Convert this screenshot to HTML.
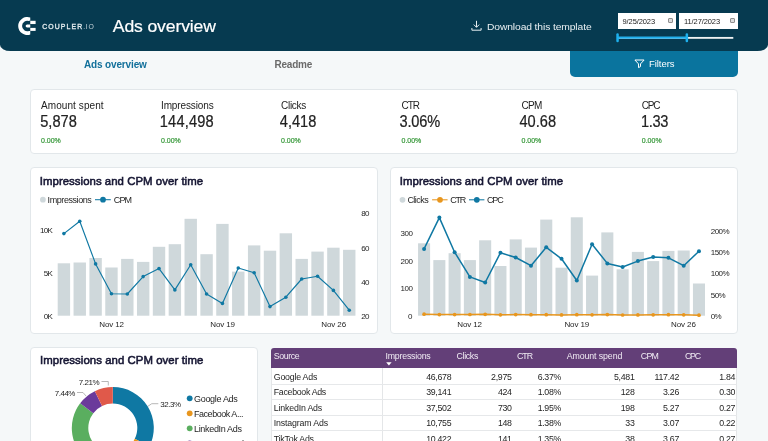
<!DOCTYPE html>
<html lang="en"><head><meta charset="utf-8"><title>Ads overview</title>
<style>
html,body{margin:0;padding:0;}
body{width:768px;height:441px;overflow:hidden;background:#f5f8f9;position:relative;font-family:"Liberation Sans",sans-serif;}
.t{position:absolute;white-space:nowrap;margin:0;}
.b{position:absolute;}
#root{position:absolute;left:0;top:0;width:768px;height:441px;will-change:transform;}
</style></head><body><div id="root">
<div class="b" style="left:0px;top:0px;width:768px;height:51px;background:#063a50;border-radius:0 0 10.5px 10.5px / 0 0 6.3px 6.3px;"></div>
<svg class="b" style="left:18px;top:17px" width="18" height="18" viewBox="0 0 18 18">
<path d="M12.26 0.54 A9 9 0 1 0 12.26 17.46 L12.26 13.9 L11 13.9 A5.2 5.2 0 1 1 11 4.1 L11 3.8 L12.26 3.8 Z" fill="#fff"/>
<rect x="12.26" y="3.8" width="5.35" height="3.25" fill="#fff"/>
<path d="M12.26 7.45 H9.1 A1.58 1.58 0 0 0 9.1 10.6 H12.26 Z" fill="#fff"/>
<rect x="12.26" y="10.9" width="5.35" height="3" fill="#fff"/>
</svg>
<div class="t" style="left:42.20px;top:22.80px;font-size:6.9px;line-height:7.00px;color:#e4ecef;letter-spacing:1.116px;transform:scaleY(1.13);transform-origin:0 6.00px;-webkit-text-stroke:0.3px #e4ecef;">COUPLER</div>
<div class="t" style="left:83.20px;top:22.80px;font-size:6.9px;line-height:7.00px;color:#c5d3d9;letter-spacing:0.764px;transform:scaleY(1.13);transform-origin:0 6.00px;">.IO</div>
<div class="t" style="left:112.80px;top:16.20px;font-size:17.6px;line-height:20.00px;color:#fff;letter-spacing:-0.136px;transform:scaleY(0.91);transform-origin:0 16.00px;-webkit-text-stroke:0.2px #fff;">Ads overview</div>
<svg class="b" style="left:471px;top:20px" width="11" height="11" viewBox="0 0 11 11" fill="none" stroke="#e8eff2" stroke-width="1">
<path d="M5.5 0.8 V7.2 M2.8 4.6 L5.5 7.3 L8.2 4.6 M0.9 8 V10.2 H10.1 V8"/></svg>
<div class="t" style="left:487.00px;top:21.10px;font-size:10.3px;line-height:11.00px;color:#e8eff2;letter-spacing:-0.115px;transform:scaleY(0.93);transform-origin:0 9.00px;">Download this template</div>
<div class="b" style="left:617.5px;top:13px;width:58.5px;height:16.3px;background:#fff;"></div>
<div class="b" style="left:679px;top:13px;width:58.7px;height:16.3px;background:#fff;"></div>
<div class="t" style="left:622.50px;top:17.00px;font-size:7.5px;line-height:9.00px;color:#1a1a1a;letter-spacing:-0.096px;">9/25/2023</div>
<div class="t" style="left:684.00px;top:17.00px;font-size:7.5px;line-height:9.00px;color:#1a1a1a;letter-spacing:-0.098px;">11/27/2023</div>
<div class="b" style="left:668.0px;top:18.3px;width:5px;height:5px;background:#dcdcdc;border:1px solid #8f8f8f;border-radius:1px;box-sizing:border-box;"></div>
<div class="b" style="left:729.5px;top:18.3px;width:5px;height:5px;background:#dcdcdc;border:1px solid #8f8f8f;border-radius:1px;box-sizing:border-box;"></div>
<div class="b" style="left:570px;top:51px;width:168px;height:26px;background:#0a749e;border-radius:0 0 5px 5px;"></div>
<svg class="b" style="left:634px;top:59.4px" width="11" height="10" viewBox="0 0 11 10" fill="none" stroke="#fff" stroke-width="1" stroke-linejoin="round">
<path d="M0.9 1 H10.1 L6.5 4.9 V7.6 L4.5 8.6 V4.9 Z"/></svg>
<div class="t" style="left:649.00px;top:58.20px;font-size:9.5px;line-height:11.00px;color:#fff;letter-spacing:-0.052px;">Filters</div>
<div class="t" style="left:83.90px;top:59.20px;font-size:10px;line-height:11.00px;color:#12709b;font-weight:700;letter-spacing:-0.139px;">Ads overview</div>
<div class="t" style="left:274.60px;top:59.20px;font-size:10px;line-height:11.00px;color:#6a6a6a;font-weight:700;letter-spacing:-0.251px;">Readme</div>
<div class="b" style="left:30px;top:89px;width:708px;height:65px;background:#fff;border:1px solid #e2e7ea;border-radius:4px;box-sizing:border-box;"></div>
<div class="t" style="left:41.00px;top:99.60px;font-size:10px;line-height:11.00px;color:#222;letter-spacing:0.083px;">Amount spent</div>
<div class="t" style="left:40.20px;top:114.00px;font-size:14.6px;line-height:16.00px;color:#222;letter-spacing:0.036px;transform:scaleY(1.1);transform-origin:0 13.00px;-webkit-text-stroke:0.2px #222;">5,878</div>
<div class="t" style="left:41.00px;top:137.20px;font-size:7px;line-height:7.00px;color:#37983a;letter-spacing:-0.010px;-webkit-text-stroke:0.2px #37983a;">0.00%</div>
<div class="t" style="left:161.00px;top:99.60px;font-size:10px;line-height:11.00px;color:#222;letter-spacing:-0.128px;">Impressions</div>
<div class="t" style="left:159.80px;top:114.00px;font-size:14.6px;line-height:16.00px;color:#222;letter-spacing:0.178px;transform:scaleY(1.1);transform-origin:0 13.00px;-webkit-text-stroke:0.2px #222;">144,498</div>
<div class="t" style="left:161.00px;top:137.20px;font-size:7px;line-height:7.00px;color:#37983a;letter-spacing:-0.010px;-webkit-text-stroke:0.2px #37983a;">0.00%</div>
<div class="t" style="left:281.00px;top:99.60px;font-size:10px;line-height:11.00px;color:#222;letter-spacing:-0.278px;">Clicks</div>
<div class="t" style="left:279.80px;top:114.00px;font-size:14.6px;line-height:16.00px;color:#222;letter-spacing:-0.004px;transform:scaleY(1.1);transform-origin:0 13.00px;-webkit-text-stroke:0.2px #222;">4,418</div>
<div class="t" style="left:281.00px;top:137.20px;font-size:7px;line-height:7.00px;color:#37983a;letter-spacing:-0.010px;-webkit-text-stroke:0.2px #37983a;">0.00%</div>
<div class="t" style="left:401.50px;top:99.60px;font-size:10px;line-height:11.00px;color:#222;letter-spacing:-1.017px;">CTR</div>
<div class="t" style="left:399.50px;top:114.00px;font-size:14.6px;line-height:16.00px;color:#222;letter-spacing:-0.176px;transform:scaleY(1.1);transform-origin:0 13.00px;-webkit-text-stroke:0.2px #222;">3.06%</div>
<div class="t" style="left:401.50px;top:137.20px;font-size:7px;line-height:7.00px;color:#37983a;letter-spacing:-0.010px;-webkit-text-stroke:0.2px #37983a;">0.00%</div>
<div class="t" style="left:521.50px;top:99.60px;font-size:10px;line-height:11.00px;color:#222;letter-spacing:-0.741px;">CPM</div>
<div class="t" style="left:519.50px;top:114.00px;font-size:14.6px;line-height:16.00px;color:#222;letter-spacing:-0.004px;transform:scaleY(1.1);transform-origin:0 13.00px;-webkit-text-stroke:0.2px #222;">40.68</div>
<div class="t" style="left:521.50px;top:137.20px;font-size:7px;line-height:7.00px;color:#37983a;letter-spacing:-0.010px;-webkit-text-stroke:0.2px #37983a;">0.00%</div>
<div class="t" style="left:641.80px;top:99.60px;font-size:10px;line-height:11.00px;color:#222;letter-spacing:-1.171px;">CPC</div>
<div class="t" style="left:641.00px;top:114.00px;font-size:14.6px;line-height:16.00px;color:#222;letter-spacing:-0.351px;transform:scaleY(1.1);transform-origin:0 13.00px;-webkit-text-stroke:0.2px #222;">1.33</div>
<div class="t" style="left:641.80px;top:137.20px;font-size:7px;line-height:7.00px;color:#37983a;letter-spacing:-0.010px;-webkit-text-stroke:0.2px #37983a;">0.00%</div>
<div class="b" style="left:30px;top:167px;width:348px;height:167px;background:#fff;border:1px solid #e2e7ea;border-radius:4px;box-sizing:border-box;"></div>
<div class="b" style="left:390px;top:167px;width:348px;height:167px;background:#fff;border:1px solid #e2e7ea;border-radius:4px;box-sizing:border-box;"></div>
<div class="t" style="left:39.80px;top:174.90px;font-size:11.4px;line-height:12.00px;color:#161633;letter-spacing:0.042px;-webkit-text-stroke:0.55px #161633;">Impressions and CPM over time</div>
<div class="t" style="left:399.80px;top:174.90px;font-size:11.4px;line-height:12.00px;color:#161633;letter-spacing:0.042px;-webkit-text-stroke:0.55px #161633;">Impressions and CPM over time</div>
<div class="b" style="left:30px;top:347px;width:228px;height:100px;background:#fff;border:1px solid #e2e7ea;border-radius:4px;box-sizing:border-box;"></div>
<div class="b" style="left:271px;top:348px;width:466px;height:100px;background:#fff;border:1px solid #e4e6e8;border-radius:3px 3px 0 0;box-sizing:border-box;"></div>
<div class="b" style="left:271px;top:348px;width:466px;height:20px;background:#633f78;border-radius:3px 3px 0 0;"></div>
<div class="b" style="left:382px;top:368.3px;width:0.8px;height:80px;background:#e4e6e8;"></div>
<div class="b" style="left:271.5px;top:383.6px;width:465px;height:0.8px;background:#e6e8ea;"></div>
<div class="b" style="left:271.5px;top:399.1px;width:465px;height:0.8px;background:#e6e8ea;"></div>
<div class="b" style="left:271.5px;top:414.6px;width:465px;height:0.8px;background:#e6e8ea;"></div>
<div class="b" style="left:271.5px;top:430.1px;width:465px;height:0.8px;background:#e6e8ea;"></div>
<svg class="b" style="left:0;top:0" width="768" height="441" viewBox="0 0 768 441">
<rect x="617.5" y="36.95" width="115.8" height="1.85" fill="#eef1f2"/>
<rect x="617.5" y="36.55" width="69.5" height="2.15" fill="#1db0ee"/>
<rect x="616.3" y="33.3" width="2.5" height="9" rx="1.2" fill="#1db0ee"/>
<rect x="685.6" y="33.3" width="2.5" height="9" rx="1.2" fill="#1db0ee"/>
<rect x="57.70" y="263.3" width="12.4" height="52.40" fill="#cfd8db"/>
<rect x="73.55" y="262.5" width="12.4" height="53.20" fill="#cfd8db"/>
<rect x="89.41" y="258" width="12.4" height="57.70" fill="#cfd8db"/>
<rect x="105.26" y="267.5" width="12.4" height="48.20" fill="#cfd8db"/>
<rect x="121.11" y="258.9" width="12.4" height="56.80" fill="#cfd8db"/>
<rect x="136.97" y="261.9" width="12.4" height="53.80" fill="#cfd8db"/>
<rect x="152.82" y="246.8" width="12.4" height="68.90" fill="#cfd8db"/>
<rect x="168.67" y="244.2" width="12.4" height="71.50" fill="#cfd8db"/>
<rect x="184.52" y="218.8" width="12.4" height="96.90" fill="#cfd8db"/>
<rect x="200.38" y="254.2" width="12.4" height="61.50" fill="#cfd8db"/>
<rect x="216.23" y="223.9" width="12.4" height="91.80" fill="#cfd8db"/>
<rect x="232.08" y="271.6" width="12.4" height="44.10" fill="#cfd8db"/>
<rect x="247.94" y="245.4" width="12.4" height="70.30" fill="#cfd8db"/>
<rect x="263.79" y="250.7" width="12.4" height="65.00" fill="#cfd8db"/>
<rect x="279.64" y="233.3" width="12.4" height="82.40" fill="#cfd8db"/>
<rect x="295.50" y="258.9" width="12.4" height="56.80" fill="#cfd8db"/>
<rect x="311.35" y="251.6" width="12.4" height="64.10" fill="#cfd8db"/>
<rect x="327.20" y="247.7" width="12.4" height="68.00" fill="#cfd8db"/>
<rect x="343.05" y="249.8" width="12.4" height="65.90" fill="#cfd8db"/>
<polyline fill="none" stroke="#0f78a3" stroke-width="1.15" stroke-linejoin="round" points="63.9,233.6 79.75,221.2 95.61,263.9 111.46,293.7 127.31,294 143.16,276.6 159.02,268.6 174.87,289.9 190.72,264.8 206.58,294 222.43,303.4 238.28,268 254.14,272.8 269.99,306.6 285.84,297.2 301.69,279 317.55,276.3 333.4,290.4 349.25,310.2"/>
<circle cx="63.9" cy="233.6" r="1.8" fill="#0f78a3"/>
<circle cx="79.75" cy="221.2" r="1.8" fill="#0f78a3"/>
<circle cx="95.61" cy="263.9" r="1.8" fill="#0f78a3"/>
<circle cx="111.46" cy="293.7" r="1.8" fill="#0f78a3"/>
<circle cx="127.31" cy="294" r="1.8" fill="#0f78a3"/>
<circle cx="143.16" cy="276.6" r="1.8" fill="#0f78a3"/>
<circle cx="159.02" cy="268.6" r="1.8" fill="#0f78a3"/>
<circle cx="174.87" cy="289.9" r="1.8" fill="#0f78a3"/>
<circle cx="190.72" cy="264.8" r="1.8" fill="#0f78a3"/>
<circle cx="206.58" cy="294" r="1.8" fill="#0f78a3"/>
<circle cx="222.43" cy="303.4" r="1.8" fill="#0f78a3"/>
<circle cx="238.28" cy="268" r="1.8" fill="#0f78a3"/>
<circle cx="254.14" cy="272.8" r="1.8" fill="#0f78a3"/>
<circle cx="269.99" cy="306.6" r="1.8" fill="#0f78a3"/>
<circle cx="285.84" cy="297.2" r="1.8" fill="#0f78a3"/>
<circle cx="301.69" cy="279" r="1.8" fill="#0f78a3"/>
<circle cx="317.55" cy="276.3" r="1.8" fill="#0f78a3"/>
<circle cx="333.4" cy="290.4" r="1.8" fill="#0f78a3"/>
<circle cx="349.25" cy="310.2" r="1.8" fill="#0f78a3"/>
<circle cx="42.9" cy="199.7" r="2.85" fill="#cfd8db"/>
<line x1="95" y1="199.7" x2="110.8" y2="199.7" stroke="#0f78a3" stroke-width="1.05"/><circle cx="103" cy="199.7" r="2.85" fill="#0f78a3"/>
<rect x="418.05" y="243.3" width="12.05" height="72.40" fill="#cfd8db"/>
<rect x="433.32" y="260.1" width="12.05" height="55.60" fill="#cfd8db"/>
<rect x="448.59" y="253.2" width="12.05" height="62.50" fill="#cfd8db"/>
<rect x="463.87" y="260.1" width="12.05" height="55.60" fill="#cfd8db"/>
<rect x="479.14" y="240.3" width="12.05" height="75.40" fill="#cfd8db"/>
<rect x="494.41" y="266" width="12.05" height="49.70" fill="#cfd8db"/>
<rect x="509.68" y="239.4" width="12.05" height="76.30" fill="#cfd8db"/>
<rect x="524.95" y="247.6" width="12.05" height="68.10" fill="#cfd8db"/>
<rect x="540.23" y="219.6" width="12.05" height="96.10" fill="#cfd8db"/>
<rect x="555.50" y="267.7" width="12.05" height="48.00" fill="#cfd8db"/>
<rect x="570.77" y="217.3" width="12.05" height="98.40" fill="#cfd8db"/>
<rect x="586.04" y="275.6" width="12.05" height="40.10" fill="#cfd8db"/>
<rect x="601.31" y="232.4" width="12.05" height="83.30" fill="#cfd8db"/>
<rect x="616.59" y="269.3" width="12.05" height="46.40" fill="#cfd8db"/>
<rect x="631.86" y="251.9" width="12.05" height="63.80" fill="#cfd8db"/>
<rect x="647.13" y="261.1" width="12.05" height="54.60" fill="#cfd8db"/>
<rect x="662.40" y="250.9" width="12.05" height="64.80" fill="#cfd8db"/>
<rect x="677.67" y="250.5" width="12.05" height="65.20" fill="#cfd8db"/>
<rect x="692.95" y="283.5" width="12.05" height="32.20" fill="#cfd8db"/>
<polyline fill="none" stroke="#e8961e" stroke-width="1.5" stroke-linejoin="round" points="424.08,314.2 439.35,314.6 454.62,314.6 469.9,314.5 485.17,314.3 500.44,314.8 515.71,314.6 530.98,314.7 546.26,314.7 561.53,314.9 576.8,314.7 592.07,314.8 607.34,314.6 622.62,315 637.89,314.9 653.16,314.8 668.43,314.7 683.7,314.8 698.98,315.2"/>
<circle cx="424.08" cy="314.2" r="1.85" fill="#e8961e"/>
<circle cx="439.35" cy="314.6" r="1.85" fill="#e8961e"/>
<circle cx="454.62" cy="314.6" r="1.85" fill="#e8961e"/>
<circle cx="469.9" cy="314.5" r="1.85" fill="#e8961e"/>
<circle cx="485.17" cy="314.3" r="1.85" fill="#e8961e"/>
<circle cx="500.44" cy="314.8" r="1.85" fill="#e8961e"/>
<circle cx="515.71" cy="314.6" r="1.85" fill="#e8961e"/>
<circle cx="530.98" cy="314.7" r="1.85" fill="#e8961e"/>
<circle cx="546.26" cy="314.7" r="1.85" fill="#e8961e"/>
<circle cx="561.53" cy="314.9" r="1.85" fill="#e8961e"/>
<circle cx="576.8" cy="314.7" r="1.85" fill="#e8961e"/>
<circle cx="592.07" cy="314.8" r="1.85" fill="#e8961e"/>
<circle cx="607.34" cy="314.6" r="1.85" fill="#e8961e"/>
<circle cx="622.62" cy="315" r="1.85" fill="#e8961e"/>
<circle cx="637.89" cy="314.9" r="1.85" fill="#e8961e"/>
<circle cx="653.16" cy="314.8" r="1.85" fill="#e8961e"/>
<circle cx="668.43" cy="314.7" r="1.85" fill="#e8961e"/>
<circle cx="683.7" cy="314.8" r="1.85" fill="#e8961e"/>
<circle cx="698.98" cy="315.2" r="1.85" fill="#e8961e"/>
<polyline fill="none" stroke="#0f78a3" stroke-width="1.5" stroke-linejoin="round" points="424.08,248.9 439.35,217.6 454.62,252.2 469.9,276.9 485.17,282.5 500.44,252.8 515.71,257.5 530.98,265.7 546.26,247.3 561.53,258.8 576.8,280.5 592.07,244.3 607.34,263.4 622.62,267 637.89,261.1 653.16,257.1 668.43,257.8 683.7,265.7 698.98,251.2"/>
<circle cx="424.08" cy="248.9" r="2" fill="#0f78a3"/>
<circle cx="439.35" cy="217.6" r="2" fill="#0f78a3"/>
<circle cx="454.62" cy="252.2" r="2" fill="#0f78a3"/>
<circle cx="469.9" cy="276.9" r="2" fill="#0f78a3"/>
<circle cx="485.17" cy="282.5" r="2" fill="#0f78a3"/>
<circle cx="500.44" cy="252.8" r="2" fill="#0f78a3"/>
<circle cx="515.71" cy="257.5" r="2" fill="#0f78a3"/>
<circle cx="530.98" cy="265.7" r="2" fill="#0f78a3"/>
<circle cx="546.26" cy="247.3" r="2" fill="#0f78a3"/>
<circle cx="561.53" cy="258.8" r="2" fill="#0f78a3"/>
<circle cx="576.8" cy="280.5" r="2" fill="#0f78a3"/>
<circle cx="592.07" cy="244.3" r="2" fill="#0f78a3"/>
<circle cx="607.34" cy="263.4" r="2" fill="#0f78a3"/>
<circle cx="622.62" cy="267" r="2" fill="#0f78a3"/>
<circle cx="637.89" cy="261.1" r="2" fill="#0f78a3"/>
<circle cx="653.16" cy="257.1" r="2" fill="#0f78a3"/>
<circle cx="668.43" cy="257.8" r="2" fill="#0f78a3"/>
<circle cx="683.7" cy="265.7" r="2" fill="#0f78a3"/>
<circle cx="698.98" cy="251.2" r="2" fill="#0f78a3"/>
<circle cx="402.5" cy="199.8" r="2.85" fill="#cfd8db"/>
<line x1="432.1" y1="199.8" x2="447.6" y2="199.8" stroke="#e8961e" stroke-width="1.05"/><circle cx="440" cy="199.8" r="2.85" fill="#e8961e"/>
<line x1="469" y1="199.8" x2="484.4" y2="199.8" stroke="#0f78a3" stroke-width="1.05"/><circle cx="476.8" cy="199.8" r="2.85" fill="#0f78a3"/>
<path d="M112.80 387.00 A41 41 0 0 1 149.56 446.16 L134.77 438.85 A24.5 24.5 0 0 0 112.80 403.50 Z" fill="#0f78a3"/>
<path d="M149.56 446.16 A41 41 0 0 1 89.99 462.07 L99.17 448.36 A24.5 24.5 0 0 0 134.77 438.85 Z" fill="#e8961e"/>
<path d="M89.99 462.07 A41 41 0 0 1 80.16 403.19 L93.30 413.17 A24.5 24.5 0 0 0 99.17 448.36 Z" fill="#5aae5f"/>
<path d="M80.16 403.19 A41 41 0 0 1 94.85 391.14 L102.07 405.97 A24.5 24.5 0 0 0 93.30 413.17 Z" fill="#6b3a9b"/>
<path d="M94.85 391.14 A41 41 0 0 1 112.80 387.00 L112.80 403.50 A24.5 24.5 0 0 0 102.07 405.97 Z" fill="#e0594a"/>
<path d="M101.5 381.5 H108.3 V385.5 M77 392.5 H83 L86 396 M148 406.2 L151.8 403.7 H158.3" fill="none" stroke="#999" stroke-width="0.7"/>
<circle cx="189.7" cy="398.3" r="2.9" fill="#0f78a3"/>
<circle cx="189.7" cy="413.3" r="2.9" fill="#e8961e"/>
<circle cx="189.7" cy="428.3" r="2.9" fill="#5aae5f"/>
<circle cx="189.7" cy="443.3" r="2.9" fill="#6b3a9b"/>
</svg>
<div class="t" style="left:40.00px;top:354.40px;font-size:11.4px;line-height:12.00px;color:#161633;letter-spacing:0.049px;-webkit-text-stroke:0.55px #161633;">Impressions and CPM over time</div>
<div class="t" style="left:47.60px;top:195.00px;font-size:9px;line-height:10.00px;color:#252525;letter-spacing:-0.429px;">Impressions</div>
<div class="t" style="left:113.80px;top:195.00px;font-size:9px;line-height:10.00px;color:#252525;letter-spacing:-0.867px;">CPM</div>
<div class="t" style="left:39.89px;top:226.20px;font-size:8px;line-height:9.00px;color:#252525;letter-spacing:-0.641px;">10K</div>
<div class="t" style="left:43.74px;top:269.20px;font-size:8px;line-height:9.00px;color:#252525;letter-spacing:-0.660px;">5K</div>
<div class="t" style="left:43.74px;top:311.70px;font-size:8px;line-height:9.00px;color:#252525;letter-spacing:-0.660px;">0K</div>
<div class="t" style="left:361.20px;top:209.20px;font-size:8px;line-height:9.00px;color:#252525;letter-spacing:-0.549px;">80</div>
<div class="t" style="left:361.20px;top:244.30px;font-size:8px;line-height:9.00px;color:#252525;letter-spacing:-0.549px;">60</div>
<div class="t" style="left:361.20px;top:278.20px;font-size:8px;line-height:9.00px;color:#252525;letter-spacing:-0.549px;">40</div>
<div class="t" style="left:361.20px;top:312.10px;font-size:8px;line-height:9.00px;color:#252525;letter-spacing:-0.549px;">20</div>
<div class="t" style="left:99.25px;top:319.60px;font-size:8px;line-height:9.00px;color:#252525;letter-spacing:-0.108px;">Nov 12</div>
<div class="t" style="left:210.25px;top:319.60px;font-size:8px;line-height:9.00px;color:#252525;letter-spacing:-0.108px;">Nov 19</div>
<div class="t" style="left:321.35px;top:319.60px;font-size:8px;line-height:9.00px;color:#252525;letter-spacing:-0.108px;">Nov 26</div>
<div class="t" style="left:407.40px;top:195.00px;font-size:9px;line-height:10.00px;color:#252525;letter-spacing:-0.533px;">Clicks</div>
<div class="t" style="left:450.20px;top:195.00px;font-size:9px;line-height:10.00px;color:#252525;letter-spacing:-1.232px;">CTR</div>
<div class="t" style="left:487.00px;top:195.00px;font-size:9px;line-height:10.00px;color:#252525;letter-spacing:-1.167px;">CPC</div>
<div class="t" style="left:400.52px;top:229.10px;font-size:8px;line-height:9.00px;color:#252525;letter-spacing:-0.489px;">300</div>
<div class="t" style="left:400.52px;top:256.70px;font-size:8px;line-height:9.00px;color:#252525;letter-spacing:-0.489px;">200</div>
<div class="t" style="left:400.52px;top:284.40px;font-size:8px;line-height:9.00px;color:#252525;letter-spacing:-0.489px;">100</div>
<div class="t" style="left:407.95px;top:311.80px;font-size:8px;line-height:9.00px;color:#252525;">0</div>
<div class="t" style="left:710.70px;top:226.85px;font-size:8px;line-height:9.00px;color:#252525;letter-spacing:-0.486px;">200%</div>
<div class="t" style="left:710.70px;top:248.10px;font-size:8px;line-height:9.00px;color:#252525;letter-spacing:-0.486px;">150%</div>
<div class="t" style="left:710.70px;top:269.35px;font-size:8px;line-height:9.00px;color:#252525;letter-spacing:-0.486px;">100%</div>
<div class="t" style="left:710.70px;top:290.60px;font-size:8px;line-height:9.00px;color:#252525;letter-spacing:-0.507px;">50%</div>
<div class="t" style="left:710.70px;top:311.85px;font-size:8px;line-height:9.00px;color:#252525;letter-spacing:-0.549px;">0%</div>
<div class="t" style="left:457.25px;top:319.60px;font-size:8px;line-height:9.00px;color:#252525;letter-spacing:-0.108px;">Nov 12</div>
<div class="t" style="left:564.45px;top:319.60px;font-size:8px;line-height:9.00px;color:#252525;letter-spacing:-0.108px;">Nov 19</div>
<div class="t" style="left:671.05px;top:319.60px;font-size:8px;line-height:9.00px;color:#252525;letter-spacing:-0.108px;">Nov 26</div>
<div class="t" style="left:78.80px;top:378.00px;font-size:8px;line-height:9.00px;color:#252525;letter-spacing:-0.477px;">7.21%</div>
<div class="t" style="left:54.70px;top:389.00px;font-size:8px;line-height:9.00px;color:#252525;letter-spacing:-0.477px;">7.44%</div>
<div class="t" style="left:160.30px;top:400.00px;font-size:8px;line-height:9.00px;color:#252525;letter-spacing:-0.477px;">32.3%</div>
<div class="t" style="left:194.00px;top:394.10px;font-size:9px;line-height:10.00px;color:#252525;letter-spacing:-0.303px;">Google Ads</div>
<div class="t" style="left:194.00px;top:409.10px;font-size:9px;line-height:10.00px;color:#252525;letter-spacing:-0.464px;">Facebook A...</div>
<div class="t" style="left:194.00px;top:424.10px;font-size:9px;line-height:10.00px;color:#252525;letter-spacing:-0.328px;">LinkedIn Ads</div>
<div class="t" style="left:194.00px;top:439.10px;font-size:9px;line-height:10.00px;color:#252525;letter-spacing:-0.271px;">Instagram Ads</div>
<div class="t" style="left:273.80px;top:350.80px;font-size:8.8px;line-height:10.00px;color:#f1ecf4;letter-spacing:-0.412px;">Source</div>
<div class="t" style="left:385.50px;top:350.80px;font-size:8.8px;line-height:10.00px;color:#f1ecf4;letter-spacing:-0.220px;">Impressions</div>
<div class="t" style="left:456.50px;top:350.80px;font-size:8.8px;line-height:10.00px;color:#f1ecf4;letter-spacing:-0.326px;">Clicks</div>
<div class="t" style="left:517.00px;top:350.80px;font-size:8.8px;line-height:10.00px;color:#f1ecf4;letter-spacing:-1.026px;">CTR</div>
<div class="t" style="left:566.80px;top:350.80px;font-size:8.8px;line-height:10.00px;color:#f1ecf4;letter-spacing:-0.111px;">Amount spend</div>
<div class="t" style="left:640.70px;top:350.80px;font-size:8.8px;line-height:10.00px;color:#f1ecf4;letter-spacing:-0.649px;">CPM</div>
<div class="t" style="left:685.00px;top:350.80px;font-size:8.8px;line-height:10.00px;color:#f1ecf4;letter-spacing:-1.291px;">CPC</div>
<svg class="b" style="left:386px;top:362px" width="6" height="4" viewBox="0 0 6 4"><path d="M0.2 0.2 H5.6 L2.9 3.4 Z" fill="#fff"/></svg>
<div class="t" style="left:273.80px;top:371.70px;font-size:8.8px;line-height:10.00px;color:#252525;letter-spacing:-0.218px;">Google Ads</div>
<div class="t" style="left:426.17px;top:371.70px;font-size:8.8px;line-height:10.00px;color:#252525;letter-spacing:-0.296px;">46,678</div>
<div class="t" style="left:491.04px;top:371.70px;font-size:8.8px;line-height:10.00px;color:#252525;letter-spacing:-0.291px;">2,975</div>
<div class="t" style="left:537.70px;top:371.70px;font-size:8.8px;line-height:10.00px;color:#252525;letter-spacing:-0.329px;">6.37%</div>
<div class="t" style="left:613.94px;top:371.70px;font-size:8.8px;line-height:10.00px;color:#252525;letter-spacing:-0.291px;">5,481</div>
<div class="t" style="left:654.48px;top:371.70px;font-size:8.8px;line-height:10.00px;color:#252525;letter-spacing:-0.289px;">117.42</div>
<div class="t" style="left:719.21px;top:371.70px;font-size:8.8px;line-height:10.00px;color:#252525;letter-spacing:-0.282px;">1.84</div>
<div class="t" style="left:273.80px;top:387.20px;font-size:8.8px;line-height:10.00px;color:#252525;letter-spacing:-0.304px;">Facebook Ads</div>
<div class="t" style="left:426.17px;top:387.20px;font-size:8.8px;line-height:10.00px;color:#252525;letter-spacing:-0.296px;">39,141</div>
<div class="t" style="left:497.89px;top:387.20px;font-size:8.8px;line-height:10.00px;color:#252525;letter-spacing:-0.323px;">424</div>
<div class="t" style="left:537.70px;top:387.20px;font-size:8.8px;line-height:10.00px;color:#252525;letter-spacing:-0.329px;">1.08%</div>
<div class="t" style="left:620.79px;top:387.20px;font-size:8.8px;line-height:10.00px;color:#252525;letter-spacing:-0.323px;">128</div>
<div class="t" style="left:663.01px;top:387.20px;font-size:8.8px;line-height:10.00px;color:#252525;letter-spacing:-0.282px;">3.26</div>
<div class="t" style="left:719.21px;top:387.20px;font-size:8.8px;line-height:10.00px;color:#252525;letter-spacing:-0.282px;">0.30</div>
<div class="t" style="left:273.80px;top:402.70px;font-size:8.8px;line-height:10.00px;color:#252525;letter-spacing:-0.181px;">LinkedIn Ads</div>
<div class="t" style="left:426.17px;top:402.70px;font-size:8.8px;line-height:10.00px;color:#252525;letter-spacing:-0.296px;">37,502</div>
<div class="t" style="left:497.89px;top:402.70px;font-size:8.8px;line-height:10.00px;color:#252525;letter-spacing:-0.323px;">730</div>
<div class="t" style="left:537.70px;top:402.70px;font-size:8.8px;line-height:10.00px;color:#252525;letter-spacing:-0.329px;">1.95%</div>
<div class="t" style="left:620.79px;top:402.70px;font-size:8.8px;line-height:10.00px;color:#252525;letter-spacing:-0.323px;">198</div>
<div class="t" style="left:663.01px;top:402.70px;font-size:8.8px;line-height:10.00px;color:#252525;letter-spacing:-0.282px;">5.27</div>
<div class="t" style="left:719.21px;top:402.70px;font-size:8.8px;line-height:10.00px;color:#252525;letter-spacing:-0.282px;">0.27</div>
<div class="t" style="left:273.80px;top:418.20px;font-size:8.8px;line-height:10.00px;color:#252525;letter-spacing:-0.164px;">Instagram Ads</div>
<div class="t" style="left:426.17px;top:418.20px;font-size:8.8px;line-height:10.00px;color:#252525;letter-spacing:-0.296px;">10,755</div>
<div class="t" style="left:497.89px;top:418.20px;font-size:8.8px;line-height:10.00px;color:#252525;letter-spacing:-0.323px;">148</div>
<div class="t" style="left:537.70px;top:418.20px;font-size:8.8px;line-height:10.00px;color:#252525;letter-spacing:-0.329px;">1.38%</div>
<div class="t" style="left:625.36px;top:418.20px;font-size:8.8px;line-height:10.00px;color:#252525;letter-spacing:-0.323px;">33</div>
<div class="t" style="left:663.01px;top:418.20px;font-size:8.8px;line-height:10.00px;color:#252525;letter-spacing:-0.282px;">3.07</div>
<div class="t" style="left:719.21px;top:418.20px;font-size:8.8px;line-height:10.00px;color:#252525;letter-spacing:-0.282px;">0.22</div>
<div class="t" style="left:273.80px;top:433.70px;font-size:8.8px;line-height:10.00px;color:#252525;letter-spacing:-0.221px;">TikTok Ads</div>
<div class="t" style="left:426.17px;top:433.70px;font-size:8.8px;line-height:10.00px;color:#252525;letter-spacing:-0.296px;">10,422</div>
<div class="t" style="left:497.89px;top:433.70px;font-size:8.8px;line-height:10.00px;color:#252525;letter-spacing:-0.323px;">141</div>
<div class="t" style="left:537.70px;top:433.70px;font-size:8.8px;line-height:10.00px;color:#252525;letter-spacing:-0.329px;">1.35%</div>
<div class="t" style="left:625.36px;top:433.70px;font-size:8.8px;line-height:10.00px;color:#252525;letter-spacing:-0.323px;">38</div>
<div class="t" style="left:663.01px;top:433.70px;font-size:8.8px;line-height:10.00px;color:#252525;letter-spacing:-0.282px;">3.67</div>
<div class="t" style="left:719.21px;top:433.70px;font-size:8.8px;line-height:10.00px;color:#252525;letter-spacing:-0.282px;">0.27</div>
</div></body></html>
